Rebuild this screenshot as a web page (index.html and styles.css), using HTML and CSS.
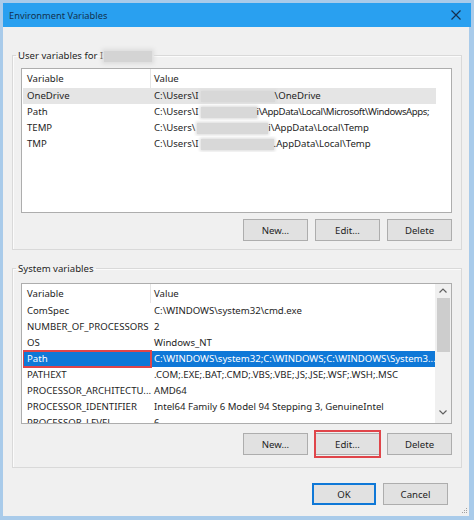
FILE: index.html
```html
<!DOCTYPE html>
<html>
<head>
<meta charset="utf-8">
<link rel="stylesheet" href="styles.css">
</head>
<body>
<div class="window">
  <div class="titlebar">
    <span class="title">Environment Variables</span>
    <svg class="close" width="10" height="10" viewBox="0 0 10 10"><path d="M0.5 0.5 L9.5 9.5 M9.5 0.5 L0.5 9.5" stroke="#16314f" stroke-width="1.2" fill="none"/></svg>
  </div>
  <div class="content">
    <fieldset class="group g1">
      <legend>User variables for I<span class="redact r-legend"></span></legend>
      <div class="list l1">
        <div class="row head"><span class="c1">Variable</span><span class="c2">Value</span></div>
        <div class="row hover"><span class="c1">OneDrive</span><span class="c2">C:\Users\I<span class="redact r1"></span>\OneDrive</span></div>
        <div class="row"><span class="c1">Path</span><span class="c2">C:\Users\I<span class="redact r2"></span><span class="tight">i\AppData\Local\Microsoft\WindowsApps;</span></span></div>
        <div class="row"><span class="c1">TEMP</span><span class="c2">C:\Users\<span class="redact r3"></span>i\AppData\Local\Temp</span></div>
        <div class="row"><span class="c1">TMP</span><span class="c2">C:\Users\I<span class="redact r4"></span>.AppData\Local\Temp</span></div>
      </div>
      <div class="btnrow">
        <button class="btn">New...</button>
        <button class="btn">Edit...</button>
        <button class="btn">Delete</button>
      </div>
    </fieldset>
    <fieldset class="group g2">
      <legend>System variables</legend>
      <div class="list l2">
        <div class="rows">
          <div class="row head"><span class="c1">Variable</span><span class="c2">Value</span></div>
          <div class="row"><span class="c1">ComSpec</span><span class="c2">C:\WINDOWS\system32\cmd.exe</span></div>
          <div class="row"><span class="c1">NUMBER_OF_PROCESSORS</span><span class="c2">2</span></div>
          <div class="row"><span class="c1">OS</span><span class="c2">Windows_NT</span></div>
          <div class="row selected"><span class="c1 marked">Path</span><span class="c2">C:\WINDOWS\system32;C:\WINDOWS;C:\WINDOWS\System3...</span></div>
          <div class="row"><span class="c1">PATHEXT</span><span class="c2">.COM;.EXE;.BAT;.CMD;.VBS;.VBE;.JS;.JSE;.WSF;.WSH;.MSC</span></div>
          <div class="row"><span class="c1">PROCESSOR_ARCHITECTU...</span><span class="c2">AMD64</span></div>
          <div class="row"><span class="c1">PROCESSOR_IDENTIFIER</span><span class="c2">Intel64 Family 6 Model 94 Stepping 3, GenuineIntel</span></div>
          <div class="row"><span class="c1">PROCESSOR_LEVEL</span><span class="c2">6</span></div>
        </div>
        <div class="scrollbar">
          <svg class="arrow" width="8" height="5" viewBox="0 0 8 5"><path d="M0.5 4.5 L4 1 L7.5 4.5" stroke="#606060" stroke-width="1.2" fill="none"/></svg>
          <div class="thumb"></div>
          <div class="track"></div>
          <svg class="arrow" width="8" height="5" viewBox="0 0 8 5"><path d="M0.5 0.5 L4 4 L7.5 0.5" stroke="#606060" stroke-width="1.2" fill="none"/></svg>
        </div>
      </div>
      <div class="btnrow b2">
        <button class="btn">New...</button>
        <button class="btn marked-btn">Edit...</button>
        <button class="btn">Delete</button>
      </div>
    </fieldset>
    <div class="dlgbtns">
      <button class="btn ok">OK</button>
      <button class="btn">Cancel</button>
    </div>
    <svg class="grip" width="7" height="7" viewBox="0 0 7 7"><g fill="#a0a0a0"><rect x="5" y="1" width="1" height="1"/><rect x="3" y="3" width="1" height="1"/><rect x="5" y="3" width="1" height="1"/><rect x="1" y="5" width="1" height="1"/><rect x="3" y="5" width="1" height="1"/><rect x="5" y="5" width="1" height="1"/></g></svg>
  </div>
</div>
</body>
</html>
```
FILE: styles.css
```css
* { box-sizing: border-box; }
html, body { margin: 0; padding: 0; }
body {
  background: #a9cbea;
  width: 474px;
  height: 520px;
  padding: 3px 5px 4px 3px;
  font-family: "Noto Sans", "Open Sans", sans-serif;
  font-size: 9.6px;
  color: #1e1e1e;
}
.window {
  height: 513px;
  background: #f0f0f0;
  display: flex;
  flex-direction: column;
}
.titlebar {
  height: 24px;
  background: #29a0f0;
  margin-right: -2px;
  display: flex;
  align-items: center;
  justify-content: space-between;
  padding: 0 8px 0 6px;
}
.title {
  font-size: 9.3px;
  color: #12314f;
}
.close { margin-right: 2px; }
.content {
  flex: 1;
  position: relative;
  padding: 21px 7px 0 9px;
}
.group {
  margin: 0;
  border: 1px solid #d9d9d9;
  box-shadow: 1px 1px 0 #fbfbfb inset;
  padding: 0 9px 8px 8px;
}
.group legend {
  margin-left: -5px;
  padding: 0 2px;
  line-height: 15px;
  height: 15px;
}
.redact {
  display: inline-block;
  vertical-align: middle;
  background: #d8d8d8;
  box-shadow: 0 0 3px 1px #dadada;
  height: 11px;
}
.r-legend { width: 48px; margin-left: 1px; background: #d4d4d4; box-shadow: 0 0 4px 2px #dcdcdc; }
.r1 { width: 74px; margin-left: 2px; }
.r2 { width: 56px; margin-left: 2px; }
.r3 { width: 71px; margin-left: 2px; }
.r4 { width: 73px; margin-left: 2px; }
.tight { letter-spacing: -0.4px; }
.g1 .list { margin-top: 5px; }
.list {
  border: 1px solid #adadad;
  background: #fff;
  overflow: hidden;
  position: relative;
}
.l1 { height: 145px; padding: 0 15px 0 1px; }
.l2 { height: 141px; padding: 0 0 0 1px; display: flex; }
.l2 .rows { flex: 1; overflow: hidden; }
.row {
  display: grid;
  grid-template-columns: 128px 1fr;
  height: 16px;
  line-height: 16px;
  white-space: nowrap;
}
.row.head { height: 19px; line-height: 19px; }
.row.head .c1 { border-right: 1px solid #e5e5e5; }
.c1, .c2 { padding-left: 4px; overflow: hidden; }
.c2 { padding-left: 3px; }
.row.hover { background: #e5e5e5; }
.row.selected { background: #0f78d7; color: #fff; }
.c1.marked { outline: 2px solid #e0454a; outline-offset: -1px; }
.scrollbar {
  width: 16px;
  background: #f0f0f0;
  display: flex;
  flex-direction: column;
  align-items: center;
  padding: 4px 0 8px;
}
.scrollbar .arrow { flex: none; }
.thumb {
  width: 13px;
  height: 54px;
  background: #cdcdcd;
  margin-top: 5px;
}
.track { flex: 1; }
.btnrow {
  display: flex;
  justify-content: flex-end;
  gap: 7px;
  margin-top: 6px;
}
.btnrow.b2 { margin-top: 9px; padding-bottom: 4px; }
.btn {
  font-family: inherit;
  font-size: 9.6px;
  color: #1e1e1e;
  width: 65px;
  height: 22px;
  background: #e1e1e1;
  border: 1px solid #adadad;
  padding: 0;
  position: relative;
}
.marked-btn::after {
  content: "";
  position: absolute;
  left: -2px; right: -2px; top: -4px; bottom: -4px;
  border: 2px solid #e0454a;
}
.g2 { margin-top: 11px; }
.g2 .list { margin-top: 7px; }
.dlgbtns {
  display: flex;
  justify-content: flex-end;
  gap: 7px;
  margin-top: 15px;
  padding-right: 14px;
}
.btn.ok { border: 1px solid #0f78d7; box-shadow: inset 0 0 0 1px #0f78d7; width: 64px; }
.grip { position: absolute; right: 1px; bottom: 2px; }
```
